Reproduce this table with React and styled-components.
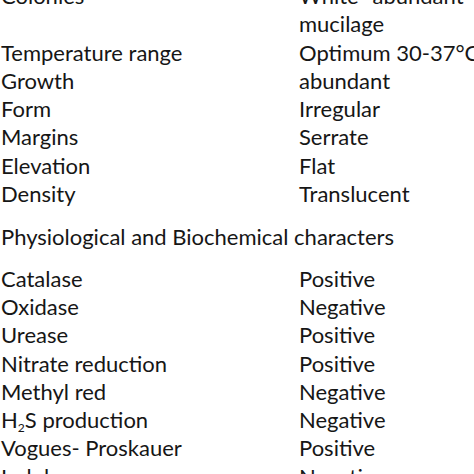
import styled, { createGlobalStyle } from "styled-components";

const Global = createGlobalStyle`
  html, body {
    margin: 0;
    padding: 0;
    background: #ffffff;
    overflow: hidden;
  }
`;

const Page = styled.div`
  width: 474px;
  height: 474px;
  overflow: hidden;
  background: #ffffff;
`;

const Table = styled.div`
  margin-top: -18px;
  font-family: Lato, "Liberation Sans", sans-serif;
  font-size: 22px;
  line-height: 28.3px;
  color: #161616;
`;

const Row = styled.div`
  display: grid;
  grid-template-columns: 299px 1fr;
  white-space: nowrap;
`;

const Cell = styled.div`
  padding-left: ${(p) => (p.$first ? "1px" : "0")};
`;

const Heading = styled.div`
  padding: 15px 0 13px 1px;
  white-space: nowrap;
`;

const Sub = styled.sub`
  font-size: 0.55em;
  vertical-align: -0.35em;
  line-height: 0;
`;

const morph = [
  ["Colonies", <>White- abundant<br />mucilage</>],
  ["Temperature range", "Optimum 30-37°C"],
  ["Growth", "abundant"],
  ["Form", "Irregular"],
  ["Margins", "Serrate"],
  ["Elevation", "Flat"],
  ["Density", "Translucent"],
];

const bio = [
  ["Catalase", "Positive"],
  ["Oxidase", "Negative"],
  ["Urease", "Positive"],
  ["Nitrate reduction", "Positive"],
  ["Methyl red", "Negative"],
  [<>H<Sub>2</Sub>S production</>, "Negative"],
  ["Vogues- Proskauer", "Positive"],
  ["Indole", "Negative"],
];

export default function App() {
  return (
    <Page>
      <Global />
      <Table>
        {morph.map(([k, v], i) => (
          <Row key={i}>
            <Cell $first>{k}</Cell>
            <Cell>{v}</Cell>
          </Row>
        ))}
        <Heading>Physiological and Biochemical characters</Heading>
        {bio.map(([k, v], i) => (
          <Row key={i}>
            <Cell $first>{k}</Cell>
            <Cell>{v}</Cell>
          </Row>
        ))}
      </Table>
    </Page>
  );
}
